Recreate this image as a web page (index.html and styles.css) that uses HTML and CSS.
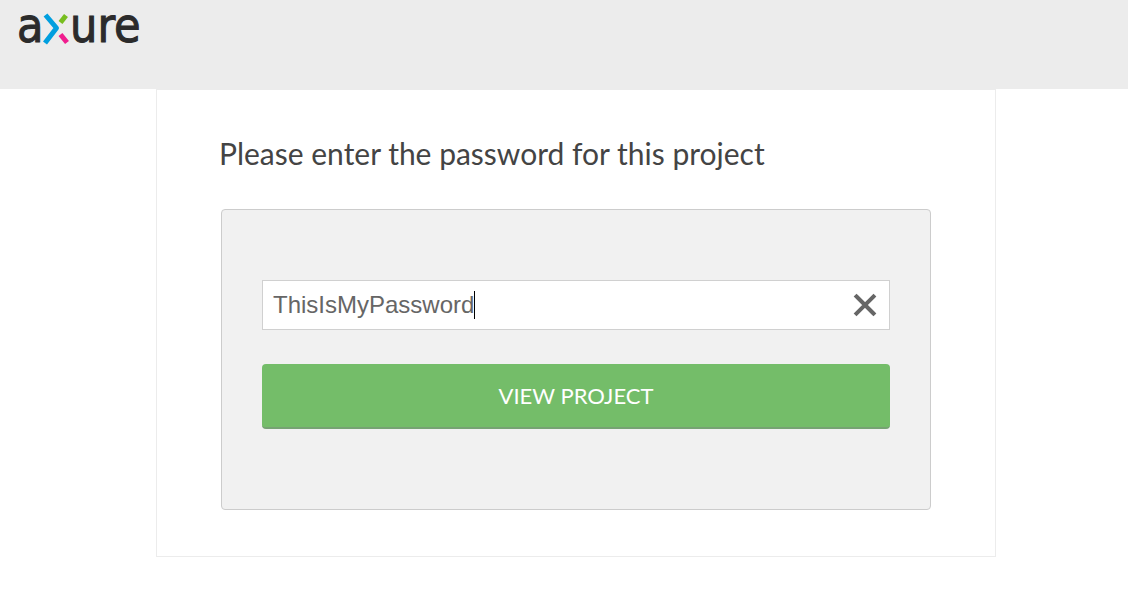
FILE: index.html
```
<!doctype html>
<html lang="en">
<head>
    <meta charset="utf-8">
    <meta name="viewport" content="width=device-width,initial-scale=1">
    <title>Axure Share</title>
    <link rel="stylesheet" href="styles.css">
</head>

<body>
	<header class="header">
		<a class="logo" href="#" aria-label="axure">
			<svg width="130" height="72" viewBox="0 -14 130 72">
				<text class="word" x="-1" y="28">a</text>
				<g fill="none" stroke-width="5" stroke-linejoin="round">
					<path stroke="#009fdf" d="M27.500 1L38.500 14L27 29"/>
					<path stroke="#78be20" d="M48 1.500L42.500 8.500"/>
					<path stroke="#f01d8e" d="M42.500 20.500L49 28.500"/>
				</g>
				<text class="word" x="52" y="28">ure</text>
			</svg>
		</a>
	</header>
	<main class="main">
		<div class="card">
			<h1 class="title"><label for="password">Please enter the password for this project</label></h1>
			<form class="panel">
				<div class="field">
					<input class="input" id="password" type="text" value="ThisIsMyPassword" autocomplete="off" spellcheck="false">
					<span class="caret"></span>
					<button class="clear" type="reset" aria-label="Clear">
						<svg width="22" height="22" viewBox="0 0 22 22"><path d="M2.500 2.500L19.500 19.500M19.500 2.500L2.500 19.500" stroke="#666" stroke-width="4" stroke-linecap="square"/></svg>
					</button>
				</div>
				<button class="submit" type="submit">VIEW PROJECT</button>
			</form>
		</div>
	</main>
</body>
</html>
```
FILE: styles.css
```
*{margin:0; padding:0; box-sizing:border-box;}
body {background:#fff; color:#444; font-family:Lato,"Open Sans",sans-serif;}
button {border:0; font-family:inherit; cursor:pointer;}
svg {display:block; overflow:visible;}
.header { height:89px; padding:0 18px; background:#ececec;}
.logo { display:inline-block;}
.word { font-family:"DejaVu Sans Condensed","DejaVu Sans",sans-serif; font-size:48px; fill:#2b2b2b; stroke:#2b2b2b; stroke-width:1px;}
.main { padding-left:24px;}
.card { max-width:840px; margin:0 auto; padding:43px 64px 46px; border:1px solid #ececec;}
.title { margin-bottom:36px; margin-left:-2px; font-size:30px; line-height:40px; font-weight:400;}
.panel { padding:70px 40px 80px; background:#f1f1f1; border:1px solid #ccc; border-radius:4px;}
.field { position:relative; margin-bottom:34px;}
.input { display:block; width:100%; height:50px; padding:0 60px 0 10px; background:#fff; border:1px solid #d0d0d0; outline:0; color:#666; font-family:"Liberation Sans",Arial,sans-serif; font-size:24px;}
.caret { position:absolute; top:11px; left:212px; width:1px; height:28px; background:#000;}
.clear { position:absolute; top:14px; right:14px; background:none;}
.submit { display:block; width:100%; height:65px; background:#74bd69; border-bottom:2px solid #76a373; border-radius:4px; color:#fff; font-size:22px;}
```
